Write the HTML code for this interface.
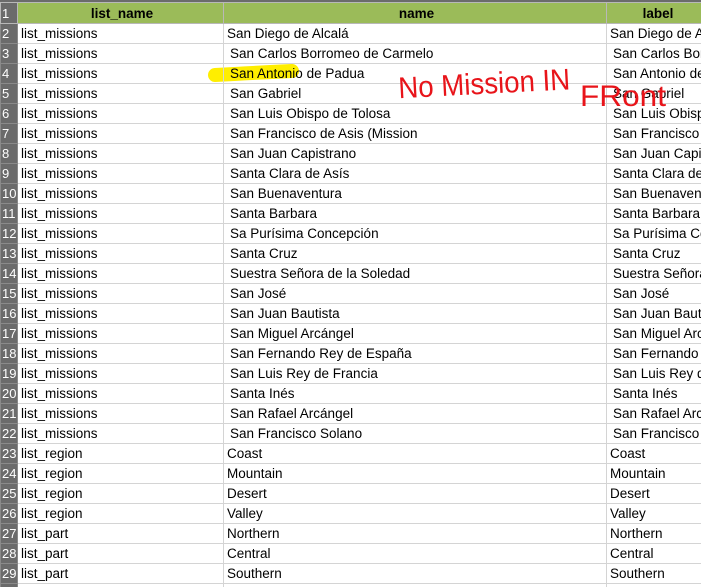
<!DOCTYPE html>
<html><head><meta charset="utf-8"><style>
html,body{margin:0;padding:0;background:#fff;width:701px;height:587px;overflow:hidden;position:relative}
table{border-collapse:collapse;table-layout:fixed;width:726px;position:absolute;left:0;top:2px;font-family:"Liberation Sans",sans-serif;font-size:13.5px;color:#000}
td{height:19px;border:1px solid #d4d4d4;padding:0 0 0 3px;white-space:nowrap;overflow:hidden;line-height:19px}
td.n{background:#6b6b6b;color:#fff;padding:0 0 0 1px;border-color:#8a8a8a;text-align:left;font-size:13px}
tr.h td{background:#9bbb59;font-weight:bold;text-align:center;height:20px;border-color:#b8b8b8}
tr.h td.n{background:#6b6b6b;font-weight:normal;text-align:left}
.s{padding-left:6px}
</style></head><body>
<div style="position:absolute;left:0;top:0;width:701px;height:2px;background:#6b6b6b"></div>
<svg width="701" height="587" style="position:absolute;left:0;top:0;z-index:0">
<path d="M215 75 Q250 73 292 71" stroke="#ffee00" stroke-width="14" fill="none" stroke-linecap="round"/>
</svg>
<table style="z-index:1">
<colgroup><col style="width:17px"><col style="width:206px"><col style="width:383px"><col style="width:120px"></colgroup>
<tr class="h"><td class="n">1</td><td>list_name</td><td>name</td><td style="padding-right:20px">label</td></tr>
<tr><td class="n">2</td><td>list_missions</td><td>San Diego de Alcalá</td><td>San Diego de Alcalá</td></tr>
<tr><td class="n">3</td><td>list_missions</td><td class="s">San Carlos Borromeo de Carmelo</td><td class="s">San Carlos Borromeo</td></tr>
<tr><td class="n">4</td><td>list_missions</td><td class="s" style="background:transparent">San Antonio de Padua</td><td class="s">San Antonio de Padua</td></tr>
<tr><td class="n">5</td><td>list_missions</td><td class="s">San Gabriel</td><td class="s">San Gabriel</td></tr>
<tr><td class="n">6</td><td>list_missions</td><td class="s">San Luis Obispo de Tolosa</td><td class="s">San Luis Obispo</td></tr>
<tr><td class="n">7</td><td>list_missions</td><td class="s">San Francisco de Asis (Mission</td><td class="s">San Francisco de</td></tr>
<tr><td class="n">8</td><td>list_missions</td><td class="s">San Juan Capistrano</td><td class="s">San Juan Capistrano</td></tr>
<tr><td class="n">9</td><td>list_missions</td><td class="s">Santa Clara de Asís</td><td class="s">Santa Clara de Asís</td></tr>
<tr><td class="n">10</td><td>list_missions</td><td class="s">San Buenaventura</td><td class="s">San Buenaventura</td></tr>
<tr><td class="n">11</td><td>list_missions</td><td class="s">Santa Barbara</td><td class="s">Santa Barbara</td></tr>
<tr><td class="n">12</td><td>list_missions</td><td class="s">Sa Purísima Concepción</td><td class="s">Sa Purísima Concepción</td></tr>
<tr><td class="n">13</td><td>list_missions</td><td class="s">Santa Cruz</td><td class="s">Santa Cruz</td></tr>
<tr><td class="n">14</td><td>list_missions</td><td class="s">Suestra Señora de la Soledad</td><td class="s">Suestra Señora</td></tr>
<tr><td class="n">15</td><td>list_missions</td><td class="s">San José</td><td class="s">San José</td></tr>
<tr><td class="n">16</td><td>list_missions</td><td class="s">San Juan Bautista</td><td class="s">San Juan Bautista</td></tr>
<tr><td class="n">17</td><td>list_missions</td><td class="s">San Miguel Arcángel</td><td class="s">San Miguel Arcángel</td></tr>
<tr><td class="n">18</td><td>list_missions</td><td class="s">San Fernando Rey de España</td><td class="s">San Fernando Rey</td></tr>
<tr><td class="n">19</td><td>list_missions</td><td class="s">San Luis Rey de Francia</td><td class="s">San Luis Rey de</td></tr>
<tr><td class="n">20</td><td>list_missions</td><td class="s">Santa Inés</td><td class="s">Santa Inés</td></tr>
<tr><td class="n">21</td><td>list_missions</td><td class="s">San Rafael Arcángel</td><td class="s">San Rafael Arcángel</td></tr>
<tr><td class="n">22</td><td>list_missions</td><td class="s">San Francisco Solano</td><td class="s">San Francisco Solano</td></tr>
<tr><td class="n">23</td><td>list_region</td><td>Coast</td><td>Coast</td></tr>
<tr><td class="n">24</td><td>list_region</td><td>Mountain</td><td>Mountain</td></tr>
<tr><td class="n">25</td><td>list_region</td><td>Desert</td><td>Desert</td></tr>
<tr><td class="n">26</td><td>list_region</td><td>Valley</td><td>Valley</td></tr>
<tr><td class="n">27</td><td>list_part</td><td>Northern</td><td>Northern</td></tr>
<tr><td class="n">28</td><td>list_part</td><td>Central</td><td>Central</td></tr>
<tr><td class="n">29</td><td>list_part</td><td>Southern</td><td>Southern</td></tr>
<tr><td class="n">30</td><td></td><td></td><td></td></tr>
</table>
<svg width="701" height="587" style="position:absolute;left:0;top:0;z-index:2">
<text x="398" y="94" fill="#e8141a" font-family="Liberation Sans,sans-serif" font-size="30" textLength="172" lengthAdjust="spacingAndGlyphs" transform="rotate(-3 480 80)">No Mission IN</text>
<text x="580" y="106" fill="#e8141a" font-family="Liberation Sans,sans-serif" font-size="30" textLength="86" lengthAdjust="spacingAndGlyphs">FRont</text>
</svg>
</body></html>
